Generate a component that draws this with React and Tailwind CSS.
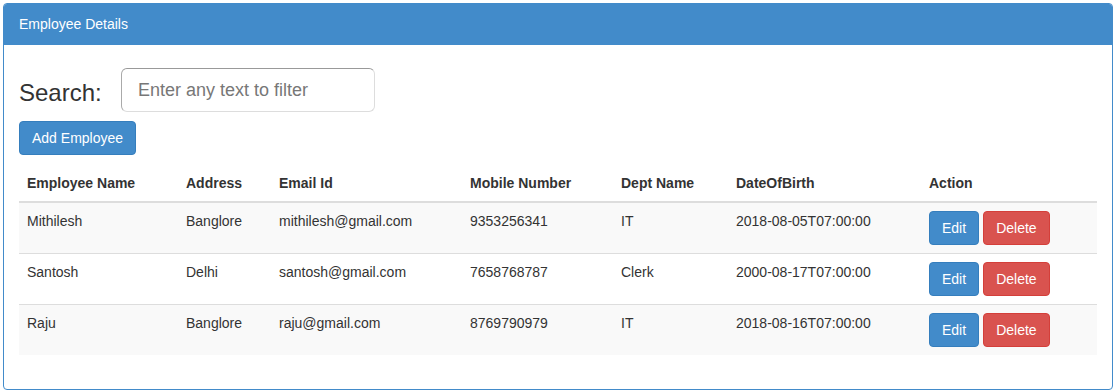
import React from "react";

const rows = [
  { name: "Mithilesh", address: "Banglore", email: "mithilesh@gmail.com", mobile: "9353256341", dept: "IT", dob: "2018-08-05T07:00:00" },
  { name: "Santosh", address: "Delhi", email: "santosh@gmail.com", mobile: "7658768787", dept: "Clerk", dob: "2000-08-17T07:00:00" },
  { name: "Raju", address: "Banglore", email: "raju@gmail.com", mobile: "8769790979", dept: "IT", dob: "2018-08-16T07:00:00" },
];

const cols = [
  { label: "Employee Name", w: "w-[159px]" },
  { label: "Address", w: "w-[93px]" },
  { label: "Email Id", w: "w-[191px]" },
  { label: "Mobile Number", w: "w-[151px]" },
  { label: "Dept Name", w: "w-[115px]" },
  { label: "DateOfBirth", w: "w-[193px]" },
  { label: "Action", w: "w-[176px]" },
];

export default function App() {
  return (
    <div className="w-[1115px] h-[392px] bg-white pt-[3px] px-[3px] text-[14px] leading-[20px] text-[#333]" style={{ fontFamily: '"Liberation Sans", Arial, sans-serif' }}>
      <div className="w-[1110px] border border-[#428bca] rounded-[4px] overflow-hidden">
        <div className="bg-[#428bca] text-white px-[15px] py-[10px] border-b border-[#428bca] h-[41px]">
          Employee Details
        </div>
        <div className="px-[15px] pt-[23px] pb-[34px]">
          <div className="flex items-center">
            <span className="text-[24px] leading-[24px] w-[102px] mt-[6px]">Search:</span>
            <input
              className="w-[254px] h-[44px] border border-[#ddd] border-t-[#999] border-l-[#aaa] rounded-[6px] px-[16px] text-[18px] placeholder:text-[#777] outline-none"
              placeholder="Enter any text to filter"
            />
          </div>
          <button className="mt-[9px] h-[34px] px-[12px] bg-[#428bca] border border-[#357ebd] rounded-[4px] text-white text-[14px]">
            Add Employee
          </button>
          <table className="mt-[10px] w-[1078px] border-collapse table-fixed">
            <thead>
              <tr>
                {cols.map((c) => (
                  <th key={c.label} className={`${c.w} text-left font-bold px-[8px] pt-[8px] pb-[8px] border-b-2 border-[#ddd] align-bottom`}>
                    {c.label}
                  </th>
                ))}
              </tr>
            </thead>
            <tbody>
              {rows.map((r, i) => (
                <tr key={r.name} className={i % 2 === 0 ? "bg-[#f9f9f9]" : "bg-white"}>
                  {[r.name, r.address, r.email, r.mobile, r.dept, r.dob].map((v, j) => (
                    <td key={j} className={`p-[8px] align-top ${i > 0 ? "border-t border-[#ddd]" : ""}`}>{v}</td>
                  ))}
                  <td className={`p-[8px] align-top ${i > 0 ? "border-t border-[#ddd]" : ""}`}>
                    <div className="flex gap-[4px]">
                      <button className="h-[34px] px-[12px] bg-[#428bca] border border-[#357ebd] rounded-[4px] text-white">Edit</button>
                      <button className="h-[34px] px-[12px] bg-[#d9534f] border border-[#d43f3a] rounded-[4px] text-white">Delete</button>
                    </div>
                  </td>
                </tr>
              ))}
            </tbody>
          </table>
        </div>
      </div>
    </div>
  );
}
